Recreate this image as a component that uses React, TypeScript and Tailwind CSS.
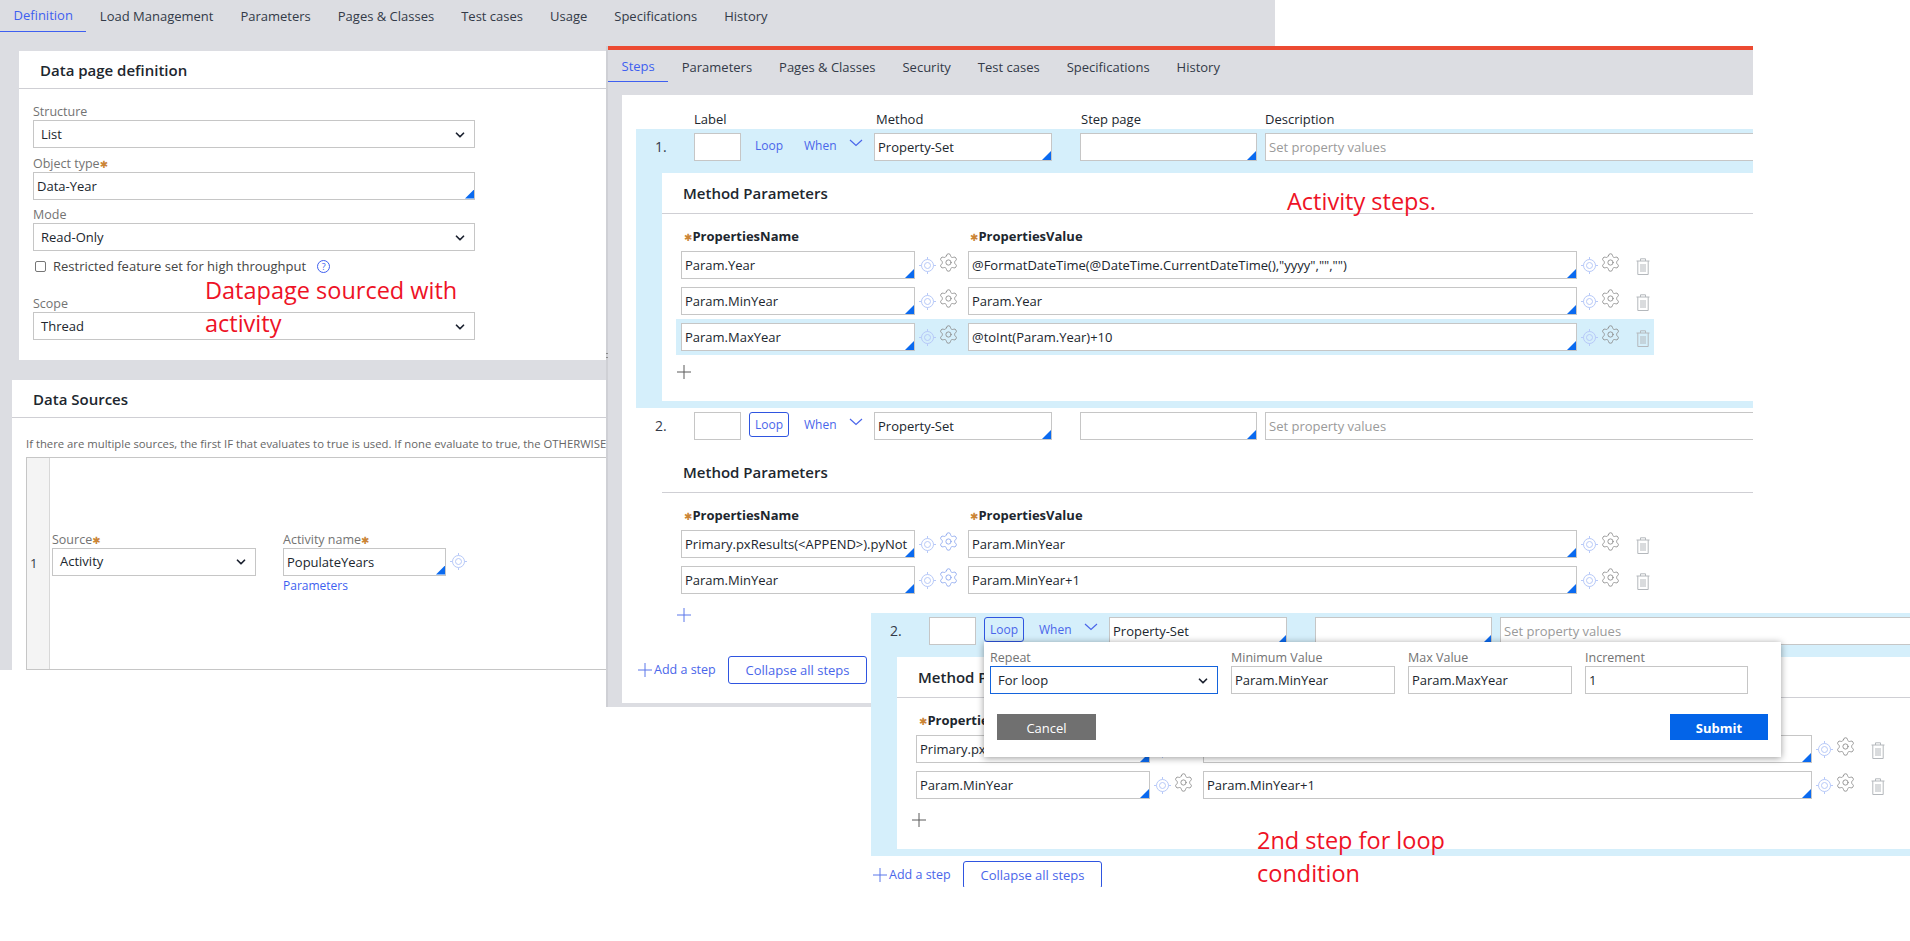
import React from "react";
import { ChevronDown, Settings } from "lucide-react";

const Crosshair = () => (
  <svg width="17" height="17" viewBox="0 0 17 17" fill="none" stroke="#b7c9f8" strokeWidth="1" className="shrink-0">
    <circle cx="8.5" cy="8.5" r="6" />
    <circle cx="8.5" cy="8.5" r="3" />
    <path d="M8.5 0v2.5M8.5 14.5V17M0 8.5h2.5M14.5 8.5H17" />
  </svg>
);

const Trash = () => (
  <svg width="14" height="17" viewBox="0 0 14 17" fill="none" stroke="#b4b8bc" strokeWidth="1" className="shrink-0">
    <path d="M.5 3h13M4.5 3V.8h5V3M1.8 3v13.5h10.4V3" />
    <path d="M5 6v8M7 6v8M9 6v8" />
  </svg>
);

const PlusMark = ({ blue }: { blue?: boolean }) => (
  <svg width="14" height="14" viewBox="0 0 14 14" fill="none" stroke={blue ? "#5b76ea" : "#5a5a5a"} strokeWidth="1" className="shrink-0">
    <path d="M7 0v14M0 7h14" />
  </svg>
);

const WhenChevron = () => (
  <svg width="14" height="8" viewBox="0 0 14 8" fill="none" stroke="#4a66ea" strokeWidth="1.2" className="ml-[15px] mr-[11px] mt-[6px] shrink-0">
    <path d="M1 1l6 5.5L13 1" />
  </svg>
);

const Star = () => <span className="font-['DejaVu_Sans',sans-serif] text-[10px] text-[#cb8536]">✱</span>;

const Corner = () => (
  <span className="absolute right-0 bottom-0 w-[9px] h-[9px] bg-[#0a6af0] [clip-path:polygon(100%_0,100%_100%,0_100%)]" />
);

function TextBox({ value, width, placeholder, corner = true }: { value?: string; width: string; placeholder?: string; corner?: boolean }) {
  return (
    <div className={`relative h-[28px] shrink-0 border border-[#c6c6c6] bg-white pl-[3px] pr-[2px] text-[13px] leading-[26px] whitespace-nowrap overflow-hidden text-[#20262e] ${width}`}>
      {placeholder ? <span className="text-[#9a9a9a]">{placeholder}</span> : value}
      {corner && <Corner />}
    </div>
  );
}

function SelectBox({ value, width, focus }: { value: string; width: string; focus?: boolean }) {
  return (
    <div className={`h-[28px] shrink-0 border bg-white pl-[7px] pr-[7px] pt-[1px] flex items-center justify-between text-[13px] text-[#20262e] ${focus ? "border-[#1464dc]" : "border-[#c6c6c6]"} ${width}`}>
      {value}
      <ChevronDown size={14} strokeWidth={3} className="text-[#1c2230]" />
    </div>
  );
}

const FieldLabel = ({ children }: { children: React.ReactNode }) => (
  <div className="h-[16px] text-[12.5px] leading-[16px] text-[#737373] whitespace-nowrap">{children}</div>
);

function Tabs({ items, height, offset }: { items: string[]; height: string; offset: string }) {
  return (
    <div className={`flex items-start ${height}`}>
      {items.map((t, i) => (
        <div
          key={t}
          className={`h-[32px] px-[13.5px] flex items-center text-[13px] whitespace-nowrap ${offset} ${i === 0 ? "text-[#3e5ff0] border-b border-[#3e5ff0]" : "text-[#333a48]"}`}
        >
          {t}
        </div>
      ))}
    </div>
  );
}

type Row = { name: string; value: string; highlight?: boolean };

function ParamRow({ row, blueGear }: { row: Row; blueGear?: boolean }) {
  return (
    <div className={`h-[36px] w-[978px] ml-[14px] pl-[5px] flex items-center ${row.highlight ? "bg-[#d5effb]" : ""}`}>
      <TextBox value={row.name} width="w-[234px]" />
      <div className="ml-[4px]"><Crosshair /></div>
      <Settings size={21} strokeWidth={1} className={`ml-[2px] mb-[6px] shrink-0 ${blueGear ? "text-[#8aa6ee]" : "text-[#8c8c8c]"}`} />
      <div className="ml-[9px]"><TextBox value={row.value} width="w-[609px]" /></div>
      <div className="ml-[4px]"><Crosshair /></div>
      <Settings size={21} strokeWidth={1} className="ml-[2px] mb-[6px] shrink-0 text-[#8c8c8c]" />
      <div className="ml-[15px] mt-[2px]"><Trash /></div>
    </div>
  );
}

function StepBlock({ n, active, boxed, rows, bluePlus, blueGear }: { n: string; active?: boolean; boxed?: boolean; rows: Row[]; bluePlus?: boolean; blueGear?: boolean }) {
  return (
    <div className={`pb-[7px] ${active ? "bg-[#d5effb]" : ""}`}>
      <div className="h-[44px] pt-[4px] pl-[19px] flex items-start whitespace-nowrap">
        <div className="w-[39px] shrink-0 text-[14px] leading-[28px] text-[#333a48]">{n}</div>
        <div className="w-[47px] h-[28px] shrink-0 border border-[#c6c6c6] bg-white" />
        <div className={`ml-[8px] w-[40px] h-[25px] shrink-0 flex items-center justify-center rounded-[3px] text-[12px] text-[#4a66ea] ${boxed ? "border border-[#2f55e0]" : ""}`}>Loop</div>
        <div className="ml-[15px] w-[30px] h-[25px] shrink-0 flex items-center text-[12px] text-[#4a66ea]">When</div>
        <WhenChevron />
        <TextBox value="Property-Set" width="w-[178px]" />
        <div className="ml-[28px] shrink-0"><TextBox width="w-[177px]" /></div>
        <div className="ml-[8px] shrink-0"><TextBox placeholder="Set property values" width="w-[600px]" corner={false} /></div>
      </div>
      <div className="ml-[26px] bg-white">
        <div className="h-[41px] border-b border-[#cfcfd4] pl-[21px] flex items-center font-semibold text-[15px] text-[#20262e]">Method Parameters</div>
        <div className="h-[33px] flex items-end pb-[1px] font-bold text-[13px] leading-[16px] text-[#20262e]">
          <div className="ml-[22px] w-[286px]"><Star />PropertiesName</div>
          <div><Star />PropertiesValue</div>
        </div>
        {rows.map((r) => (
          <ParamRow key={r.name} row={r} blueGear={blueGear} />
        ))}
        <div className="h-[46px] pt-[10px] pl-[15px]"><PlusMark blue={bluePlus} /></div>
      </div>
    </div>
  );
}

const AddRow = () => (
  <div className="flex items-start pt-[5px]">
    <div className="w-[92px] pl-[2px] h-[28px] flex items-center gap-[2px] text-[12.5px] text-[#4a66ea] whitespace-nowrap">
      <PlusMark blue />
      Add a step
    </div>
    <div className="w-[139px] h-[28px] pt-[2px] shrink-0 border border-[#2f55e0] rounded-[3px] flex items-center justify-center text-[13px] text-[#4a66ea] whitespace-nowrap">
      Collapse all steps
    </div>
  </div>
);

function Note({ children, className }: { children: React.ReactNode; className: string }) {
  return <div className={`absolute text-[23.5px] leading-[33px] text-[#ee1226] whitespace-nowrap ${className}`}>{children}</div>;
}

export default function App() {
  return (
    <div className="relative w-[1910px] h-[941px] bg-white overflow-hidden font-['Open_Sans',sans-serif]">
      {/* data page window */}
      <div className="absolute left-0 top-0 w-[1275px] h-[670px] bg-[#dcdde2] overflow-hidden">
        <Tabs items={["Definition", "Load Management", "Parameters", "Pages & Classes", "Test cases", "Usage", "Specifications", "History"]} height="h-[51px]" offset="pt-[1px]" />

        <div className="ml-[19px] w-[587px] h-[309px] bg-white">
          <div className="h-[38px] border-b border-[#cfcfd4] pl-[21px] pt-[2px] flex items-center font-semibold text-[15px] text-[#20262e]">Data page definition</div>
          <div className="pl-[14px] pt-[15px] flex flex-col gap-[7.5px]">
            <div>
              <FieldLabel>Structure</FieldLabel>
              <SelectBox value="List" width="w-[442px]" />
            </div>
            <div>
              <FieldLabel>Object type<Star /></FieldLabel>
              <TextBox value="Data-Year" width="w-[442px]" />
            </div>
            <div>
              <FieldLabel>Mode</FieldLabel>
              <SelectBox value="Read-Only" width="w-[442px]" />
            </div>
            <div className="h-[16px] pl-[2px] flex items-center text-[13px] text-[#444]">
              <span className="w-[11px] h-[11px] rounded-[2px] border border-[#767676] bg-white" />
              <span className="ml-[7px]">Restricted feature set for high throughput</span>
              <span className="ml-[11px] w-[13px] h-[13px] rounded-full border border-[#3e5ff0] text-[#3e5ff0] text-[9px] flex items-center justify-center">?</span>
            </div>
            <div className="mt-[14px]">
              <FieldLabel>Scope</FieldLabel>
              <SelectBox value="Thread" width="w-[442px]" />
            </div>
          </div>
        </div>

        <div className="ml-[12px] mt-[20px] w-[594px] h-[290px] bg-white overflow-hidden">
          <div className="h-[38px] border-b border-[#cfcfd4] pl-[21px] pt-[2px] flex items-center font-semibold text-[15px] text-[#20262e]">Data Sources</div>
          <div className="ml-[14px] mt-[18px] h-[16px] text-[11.3px] leading-[16px] text-[#666] whitespace-nowrap">
            If there are multiple sources, the first IF that evaluates to true is used. If none evaluate to true, the OTHERWISE
          </div>
          <div className="ml-[14px] mt-[5px] w-[620px] h-[213px] border border-[#c6c6c6] flex">
            <div className="w-[23px] bg-[#f4f4f4] border-r border-[#d8d8d8] flex items-center pl-[3px] text-[13px] text-[#333a48]">1</div>
            <div className="pl-[2px] flex items-center gap-[27px]">
              <div className="pb-[2px]">
                <FieldLabel>Source<Star /></FieldLabel>
                <SelectBox value="Activity" width="w-[204px]" />
                <div className="h-[18px]" />
              </div>
              <div className="pb-[2px]">
                <FieldLabel>Activity name<Star /></FieldLabel>
                <div className="flex items-center gap-[4px]">
                  <TextBox value="PopulateYears" width="w-[163px]" />
                  <Crosshair />
                </div>
                <div className="h-[18px] text-[12px] leading-[20px] text-[#3e5ff0]">Parameters</div>
              </div>
            </div>
          </div>
        </div>
      </div>

      {/* activity window */}
      <div className="absolute left-[606px] top-[46px] w-[1147px] h-[661px] bg-[#dcdde2] border-l-2 border-[#cfd0d5] overflow-hidden">
        <div className="h-[4px] bg-[#ec4a32]" />
        <Tabs items={["Steps", "Parameters", "Pages & Classes", "Security", "Test cases", "Specifications", "History"]} height="h-[45px]" offset="pt-[3px]" />
        <div className="ml-[14px] h-[608px] bg-white">
          <div className="h-[34px] pl-[72px] flex items-end pb-[2px] text-[13px] leading-[16px] text-[#20262e]">
            <div className="w-[182px]">Label</div>
            <div className="w-[205px]">Method</div>
            <div className="w-[184px]">Step page</div>
            <div>Description</div>
          </div>
          <div className="ml-[14px]">
            <StepBlock
              n="1."
              active
              rows={[
                { name: "Param.Year", value: '@FormatDateTime(@DateTime.CurrentDateTime(),"yyyy","","")' },
                { name: "Param.MinYear", value: "Param.Year" },
                { name: "Param.MaxYear", value: "@toInt(Param.Year)+10", highlight: true },
              ]}
            />
            <StepBlock
              n="2."
              boxed
              bluePlus
              blueGear
              rows={[
                { name: "Primary.pxResults(<APPEND>).pyNot", value: "Param.MinYear" },
                { name: "Param.MinYear", value: "Param.MinYear+1" },
              ]}
            />
            <AddRow />
          </div>
        </div>
      </div>

      {/* loop step window */}
      <div className="absolute left-[871px] top-[613px] w-[1039px] h-[274px] bg-white overflow-hidden">
        <StepBlock
          n="2."
          active
          boxed
          rows={[
            { name: "Primary.pxResults(<APPEND>).pyNot", value: "Param.MinYear" },
            { name: "Param.MinYear", value: "Param.MinYear+1" },
          ]}
        />
        <AddRow />
      </div>

      {/* loop popover */}
      <div className="absolute left-[984px] top-[642px] w-[797px] h-[115px] bg-white shadow-[0_1px_7px_rgba(0,0,0,0.4)] pt-[8px] px-[6px]">
        <div className="flex gap-[13px]">
          <div>
            <FieldLabel>Repeat</FieldLabel>
            <SelectBox value="For loop" width="w-[228px]" focus />
          </div>
          <div>
            <FieldLabel>Minimum Value</FieldLabel>
            <TextBox value="Param.MinYear" width="w-[164px]" corner={false} />
          </div>
          <div>
            <FieldLabel>Max Value</FieldLabel>
            <TextBox value="Param.MaxYear" width="w-[164px]" corner={false} />
          </div>
          <div>
            <FieldLabel>Increment</FieldLabel>
            <TextBox value="1" width="w-[163px]" corner={false} />
          </div>
        </div>
        <div className="mt-[20px] mx-[7px] flex justify-between">
          <div className="w-[99px] h-[26px] pt-[3px] bg-[#707070] text-white text-[13px] flex items-center justify-center">Cancel</div>
          <div className="w-[98px] h-[26px] pt-[3px] bg-[#0364e8] text-white text-[13px] font-bold flex items-center justify-center">Submit</div>
        </div>
      </div>

      {/* splitter grip */}
      <div className="absolute left-[606px] top-[353px] w-[2px] h-[5px] border-y border-[#8a8a8a]" />

      <Note className="left-[205px] top-[274px]">Datapage sourced with<br />activity</Note>
      <Note className="left-[1287px] top-[185px]">Activity steps.</Note>
      <Note className="left-[1257px] top-[824px]">2nd step for loop<br />condition</Note>
    </div>
  );
}
